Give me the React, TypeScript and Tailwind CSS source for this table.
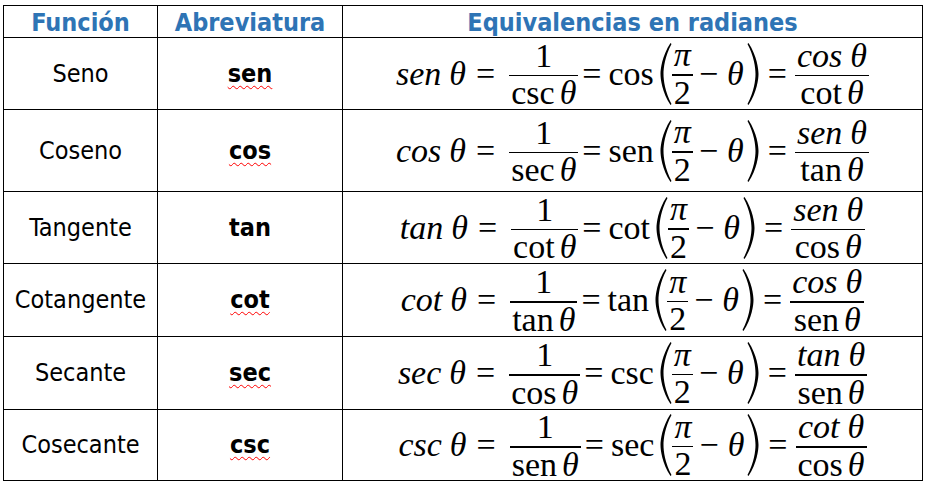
import React from 'react';

const sans = "font-['DejaVu_Sans_Condensed','DejaVu_Sans',sans-serif]";
const serif = "font-['Liberation_Serif','Times_New_Roman',serif]";

type Row = {
  name: string;
  abbr: string;
  squiggle: boolean;
  den1: string;
  func: string;
  num2: string;
  den2: string;
  h: string;
};

const rows: Row[] = [
  { name: 'Seno', abbr: 'sen', squiggle: true, den1: 'csc', func: 'cos', num2: 'cos', den2: 'cot', h: 'h-[72px]' },
  { name: 'Coseno', abbr: 'cos', squiggle: true, den1: 'sec', func: 'sen', num2: 'sen', den2: 'tan', h: 'h-[82px]' },
  { name: 'Tangente', abbr: 'tan', squiggle: false, den1: 'cot', func: 'cot', num2: 'sen', den2: 'cos', h: 'h-[72px]' },
  { name: 'Cotangente', abbr: 'cot', squiggle: true, den1: 'tan', func: 'tan', num2: 'cos', den2: 'sen', h: 'h-[73px]' },
  { name: 'Secante', abbr: 'sec', squiggle: true, den1: 'cos', func: 'csc', num2: 'tan', den2: 'sen', h: 'h-[73px]' },
  { name: 'Cosecante', abbr: 'csc', squiggle: true, den1: 'sen', func: 'sec', num2: 'cot', den2: 'cos', h: 'h-[71px]' },
];

const Frac = ({ top, bottom }: { top: React.ReactNode; bottom: React.ReactNode }) => (
  <span className="inline-flex flex-col items-center">
    <span className="px-[2px] pb-[3px] leading-[32px] whitespace-nowrap">{top}</span>
    <span className="h-[1.5px] w-full bg-black" />
    <span className="px-[2px] pt-[2px] leading-[30px] whitespace-nowrap">{bottom}</span>
  </span>
);

const Paren = ({ flip }: { flip?: boolean }) => (
  <svg width="14" height="64" viewBox="0 0 14 64" className={flip ? '-scale-x-100' : ''}>
    <path d="M12.5 1 C4 14 2.5 27 2.5 32 C2.5 37 4 50 12.5 63 L13.5 62 C7 50 5.5 38 5.5 32 C5.5 26 7 14 13.5 2 Z" fill="black" />
  </svg>
);

const Theta = () => <i>θ</i>;

const Formula = ({ r }: { r: Row }) => (
  <div className={`flex items-center justify-center text-[34px] leading-none text-black ${serif}`}>
    <span className="whitespace-nowrap">
      <i>{r.abbr}</i>
      <span className="ml-[8px]"><Theta /></span>
      <span className="ml-[10px]">=</span>
    </span>
    <span className="ml-[14px]">
      <Frac top="1" bottom={<>{r.den1}<span className="ml-[5px]"><Theta /></span></>} />
    </span>
    <span className="ml-[4px]">=</span>
    <span className="ml-[7px]">{r.func}</span>
    <span className="ml-[4px] flex"><Paren /></span>
    <Frac top={<i>π</i>} bottom="2" />
    <span className="ml-[6px]">−</span>
    <span className="ml-[9px]"><Theta /></span>
    <span className="ml-[3px] flex"><Paren flip /></span>
    <span className="ml-[7px]">=</span>
    <span className="ml-[8px]">
      <Frac
        top={<><i>{r.num2}</i><span className="ml-[8px]"><Theta /></span></>}
        bottom={<>{r.den2}<span className="ml-[5px]"><Theta /></span></>}
      />
    </span>
  </div>
);

export default function App() {
  return (
    <div className="w-[925px] h-[484px] bg-white pt-[5px] pl-[3px]">
      <table className="table-fixed border-collapse w-[919px]">
        <colgroup>
          <col className="w-[154px]" />
          <col className="w-[185px]" />
          <col className="w-[580px]" />
        </colgroup>
        <thead>
          <tr className={`h-[32px] ${sans} text-[25px] font-bold text-[#2e74b5]`}>
            <th className="border border-black p-0 pt-[1px] text-center leading-none">Función</th>
            <th className="border border-black p-0 pt-[1px] text-center leading-none">Abreviatura</th>
            <th className="border border-black p-0 pt-[1px] text-center leading-none">Equivalencias en radianes</th>
          </tr>
        </thead>
        <tbody>
          {rows.map((r) => (
            <tr key={r.name} className={r.h}>
              <td className={`border border-black p-0 text-center text-[25px] text-black ${sans}`}>{r.name}</td>
              <td className={`border border-black p-0 text-center text-[25px] font-bold text-black ${sans}`}>
                <span
                  className={
                    r.squiggle
                      ? 'underline decoration-wavy decoration-[#ff0000] decoration-[1px] underline-offset-[3px]'
                      : ''
                  }
                >
                  {r.abbr}
                </span>
              </td>
              <td className="border border-black p-0">
                <Formula r={r} />
              </td>
            </tr>
          ))}
        </tbody>
      </table>
    </div>
  );
}
